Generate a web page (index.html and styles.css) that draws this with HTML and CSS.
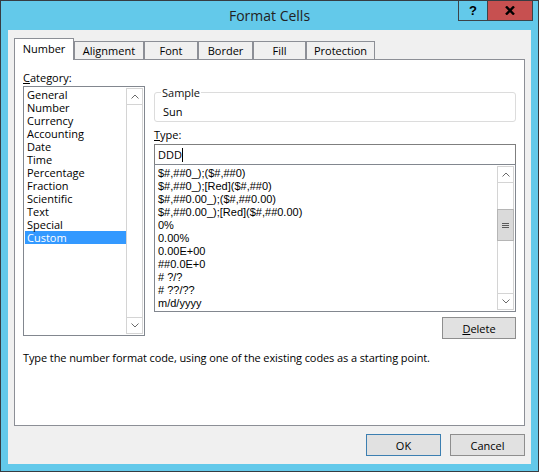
FILE: index.html
```html
<!DOCTYPE html>
<html>
<head>
<meta charset="utf-8">
<link rel="stylesheet" href="styles.css">
</head>
<body>
<div class="window">
  <div class="titlebar">
    <div class="title">Format Cells</div>
    <div class="controls">
      <div class="ctl help">?</div>
      <div class="ctl close">
        <svg width="10" height="9" viewBox="0 0 10 9"><path d="M1 0.5 L9 8.5 M9 0.5 L1 8.5" stroke="#000" stroke-width="2.4" fill="none"/></svg>
      </div>
    </div>
  </div>
  <div class="client">
    <div class="tabs">
      <div class="tab sel w-number">Number</div>
      <div class="tab w-align">Alignment</div>
      <div class="tab w-font">Font</div>
      <div class="tab w-border">Border</div>
      <div class="tab w-fill">Fill</div>
      <div class="tab w-prot">Protection</div>
    </div>
    <div class="panel">
      <div class="main">
        <div class="left">
          <div class="label"><u>C</u>ategory:</div>
          <div class="listbox">
            <div class="items">
              <div class="item">General</div>
              <div class="item">Number</div>
              <div class="item">Currency</div>
              <div class="item">Accounting</div>
              <div class="item">Date</div>
              <div class="item">Time</div>
              <div class="item">Percentage</div>
              <div class="item">Fraction</div>
              <div class="item">Scientific</div>
              <div class="item">Text</div>
              <div class="item">Special</div>
              <div class="item selected">Custom</div>
            </div>
            <div class="vscroll">
              <div class="arrow"><svg width="8" height="5" viewBox="0 0 8 5"><polyline points="0.5,4.5 4,1 7.5,4.5" fill="none" stroke="#6a6a6a" stroke-width="1"/></svg></div>
              <div class="track"></div>
              <div class="arrow down"><svg width="8" height="5" viewBox="0 0 8 5"><polyline points="0.5,0.5 4,4 7.5,0.5" fill="none" stroke="#6a6a6a" stroke-width="1"/></svg></div>
            </div>
          </div>
        </div>
        <div class="right">
          <fieldset class="sample">
            <legend>Sample</legend>
            <div class="sample-val">Sun</div>
          </fieldset>
          <div class="label type-label"><u>T</u>ype:</div>
          <div class="input">DDD<span class="caret"></span></div>
          <div class="codes">
            <div class="code-items">
              <div class="code">$#,##0_);($#,##0)</div>
              <div class="code">$#,##0_);[Red]($#,##0)</div>
              <div class="code">$#,##0.00_);($#,##0.00)</div>
              <div class="code">$#,##0.00_);[Red]($#,##0.00)</div>
              <div class="code">0%</div>
              <div class="code">0.00%</div>
              <div class="code">0.00E+00</div>
              <div class="code">##0.0E+0</div>
              <div class="code"># ?/?</div>
              <div class="code"># ??/??</div>
              <div class="code">m/d/yyyy</div>
            </div>
            <div class="vscroll">
              <div class="arrow"><svg width="8" height="5" viewBox="0 0 8 5"><polyline points="0.5,4.5 4,1 7.5,4.5" fill="none" stroke="#6a6a6a" stroke-width="1"/></svg></div>
              <div class="track pre"></div>
              <div class="thumb">
                <svg width="7" height="7" viewBox="0 0 7 7"><path d="M0 1.5 H7 M0 3.5 H7 M0 5.5 H7" stroke="#5a5a5a" stroke-width="1"/></svg>
              </div>
              <div class="track"></div>
              <div class="arrow down"><svg width="8" height="5" viewBox="0 0 8 5"><polyline points="0.5,0.5 4,4 7.5,0.5" fill="none" stroke="#6a6a6a" stroke-width="1"/></svg></div>
            </div>
          </div>
          <div class="btn delete"><u>D</u>elete</div>
        </div>
      </div>
      <div class="desc">Type the number format code, using one of the existing codes as a starting point.</div>
    </div>
    <div class="footer">
      <div class="btn ok">OK</div>
      <div class="btn">Cancel</div>
    </div>
  </div>
</div>
</body>
</html>
```
FILE: styles.css
```css
* { box-sizing: border-box; }
html, body { margin: 0; padding: 0; }
body {
  width: 539px;
  height: 472px;
  font-family: "Open Sans", "Noto Sans", sans-serif;
  font-size: 11px;
  color: #000;
}
.window {
  width: 539px;
  height: 472px;
  border: 1px solid #363c42;
  background: #63c9ea;
  display: flex;
  flex-direction: column;
}
.titlebar {
  height: 29px;
  display: grid;
  grid-template-columns: 1fr auto 1fr;
  align-items: start;
}
.title {
  grid-column: 2;
  font-size: 14px;
  line-height: 29px;
  color: #222;
}
.controls {
  grid-column: 3;
  justify-self: end;
  display: flex;
  margin-right: 5px;
}
.ctl {
  height: 20px;
  display: flex;
  align-items: center;
  justify-content: center;
  border: 1px solid #3c4348;
  border-top: none;
}
.help {
  width: 29px;
  border-right: none;
  font-family: "Liberation Sans", sans-serif;
  font-weight: bold;
  font-size: 13px;
}
.close {
  width: 46px;
  background: #c75050;
}
.client {
  flex: 1;
  margin: 0 7px 7px;
  background: #f0f0f0;
  padding: 8px 6px 8px 6px;
  display: flex;
  flex-direction: column;
}
.tabs {
  display: flex;
  align-items: flex-end;
  height: 21px;
  position: relative;
  z-index: 1;
}
.tab {
  height: 18px;
  border: 1px solid #8c8f96;
  border-bottom: none;
  background: #f0f0f0;
  display: flex;
  align-items: center;
  justify-content: center;
  line-height: 15px;
  padding-bottom: 0;
}
.tab.sel {
  height: 22px;
  margin-bottom: -1px;
  background: #fff;
  padding-bottom: 2px;
}
.w-number { width: 60px; }
.w-align { width: 70px; }
.w-font { width: 54px; }
.w-border { width: 55px; }
.w-fill { width: 53px; }
.w-prot { width: 69px; }
.panel {
  height: 367px;
  background: #fff;
  border: 1px solid #8c8f96;
  padding: 10px 8px 0 8px;
  display: flex;
  flex-direction: column;
}
.main {
  display: grid;
  grid-template-columns: 122px 362px;
  column-gap: 9px;
}
.label {
  line-height: 16px;
  height: 16px;
}
.listbox {
  height: 250px;
  border: 1px solid #82878f;
  padding: 1px;
  display: flex;
}
.items {
  flex: 1;
}
.item {
  height: 13px;
  line-height: 13px;
  padding-left: 2px;
  white-space: nowrap;
}
.item.selected {
  background: #3399ff;
  color: #fff;
}
.vscroll {
  width: 17px;
  border: 1px solid #d4d4d4;
  display: flex;
  flex-direction: column;
}
.arrow {
  height: 16px;
  display: flex;
  align-items: center;
  justify-content: center;
  border-bottom: 1px solid #d4d4d4;
}
.arrow.down {
  border-bottom: none;
  border-top: 1px solid #d4d4d4;
}
.track { flex: 1; }
.track.pre { flex: 0 0 26px; }
.thumb {
  height: 32px;
  margin: 0 -1px;
  background: #dadada;
  border: 1px solid #b5b5b5;
  display: flex;
  align-items: center;
  justify-content: center;
}
.right {
  display: flex;
  flex-direction: column;
}
.sample {
  margin: 15px 0 0 0;
  padding: 4px 8px 1px 8px;
  border: 1px solid #dcdcdc;
  border-radius: 3px;
  min-width: 0;
}
.sample legend {
  padding: 0 1px;
  margin-left: -2px;
  line-height: 15px;
  color: #111;
}
.sample-val {
  line-height: 16px;
}
.type-label {
  margin-top: 5px;
}
.input {
  margin-top: 1px;
  height: 20px;
  border: 1px solid #7f7f7f;
  border-bottom: none;
  padding-left: 3px;
  line-height: 19px;
  display: flex;
  align-items: center;
}
.caret {
  display: inline-block;
  width: 1px;
  height: 14px;
  background: #000;
  margin-left: 0;
}
.codes {
  height: 148px;
  border: 1px solid #82878f;
  padding: 1px 1px 1px 2px;
  display: flex;
  overflow: hidden;
}
.code-items {
  flex: 1;
  padding-top: 1px;
  padding-left: 1px;
  overflow: hidden;
}
.code {
  height: 13px;
  line-height: 13px;
  font-family: "Liberation Sans", Arial, sans-serif;
  font-size: 11px;
  white-space: nowrap;
}
.btn {
  height: 22px;
  width: 75px;
  background: #e1e1e1;
  border: 1px solid #8e8e8e;
  display: flex;
  align-items: center;
  justify-content: center;
}
.delete {
  align-self: flex-end;
  margin-top: 5px;
  width: 74px;
}
.desc {
  margin-top: 11px;
  line-height: 16px;
  padding-left: 0;
  letter-spacing: -0.1px;
}
.footer {
  display: flex;
  justify-content: flex-end;
  gap: 9px;
  margin-top: 8px;
}
.btn.ok {
  border-color: #3c7fb1;
}
```
